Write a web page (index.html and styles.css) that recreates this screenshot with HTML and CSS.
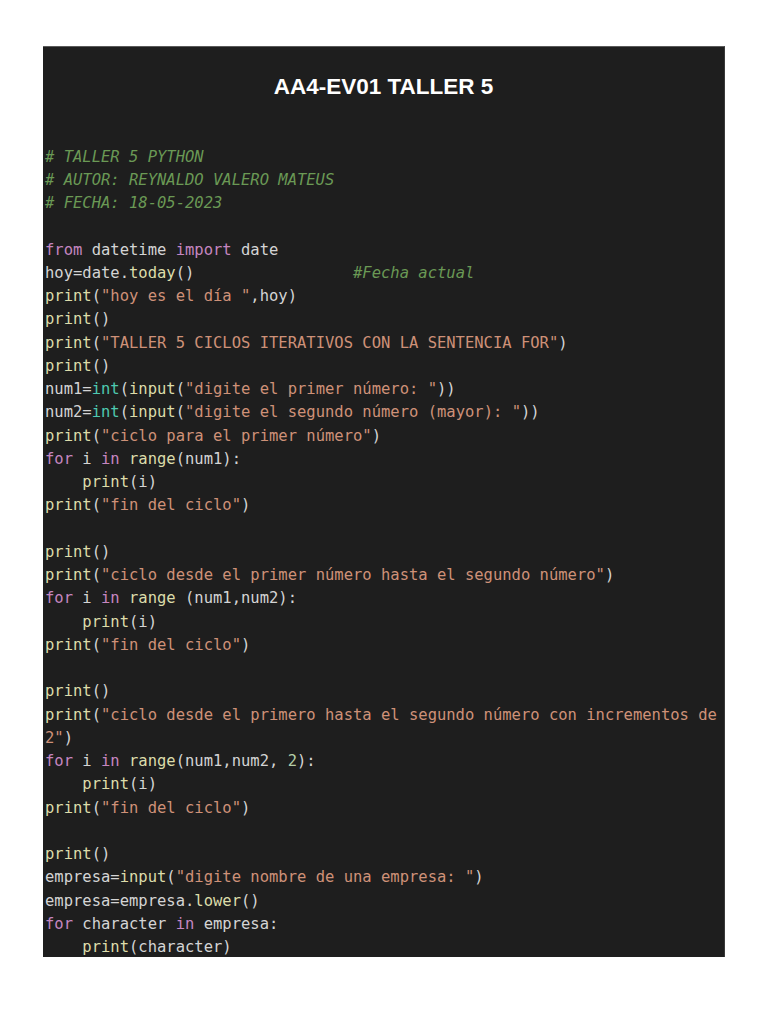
FILE: index.html
```html
<!DOCTYPE html>
<html lang="es">
<head>
<meta charset="utf-8">
<title>AA4-EV01 TALLER 5</title>
<link rel="stylesheet" href="styles.css">
</head>
<body>
<div class="sheet">
<h1 class="title">AA4-EV01 TALLER 5</h1>
<pre class="code"><span class="c"># TALLER 5 PYTHON</span>
<span class="c"># AUTOR: REYNALDO VALERO MATEUS</span>
<span class="c"># FECHA: 18-05-2023</span>

<span class="k">from</span> datetime <span class="k">import</span> date
hoy=date.<span class="f">today</span>()                 <span class="c">#Fecha actual</span>
<span class="f">print</span>(<span class="s">"hoy es el día "</span>,hoy)
<span class="f">print</span>()
<span class="f">print</span>(<span class="s">"TALLER 5 CICLOS ITERATIVOS CON LA SENTENCIA FOR"</span>)
<span class="f">print</span>()
num1=<span class="t">int</span>(<span class="f">input</span>(<span class="s">"digite el primer número: "</span>))
num2=<span class="t">int</span>(<span class="f">input</span>(<span class="s">"digite el segundo número (mayor): "</span>))
<span class="f">print</span>(<span class="s">"ciclo para el primer número"</span>)
<span class="k">for</span> i <span class="k">in</span> <span class="f">range</span>(num1):
    <span class="f">print</span>(i)
<span class="f">print</span>(<span class="s">"fin del ciclo"</span>)

<span class="f">print</span>()
<span class="f">print</span>(<span class="s">"ciclo desde el primer número hasta el segundo número"</span>)
<span class="k">for</span> i <span class="k">in</span> <span class="f">range</span> (num1,num2):
    <span class="f">print</span>(i)
<span class="f">print</span>(<span class="s">"fin del ciclo"</span>)

<span class="f">print</span>()
<span class="f">print</span>(<span class="s">"ciclo desde el primero hasta el segundo número con incrementos de 2"</span>)
<span class="k">for</span> i <span class="k">in</span> <span class="f">range</span>(num1,num2, <span class="n">2</span>):
    <span class="f">print</span>(i)
<span class="f">print</span>(<span class="s">"fin del ciclo"</span>)

<span class="f">print</span>()
empresa=<span class="f">input</span>(<span class="s">"digite nombre de una empresa: "</span>)
empresa=empresa.<span class="f">lower</span>()
<span class="k">for</span> character <span class="k">in</span> empresa:
    <span class="f">print</span>(character)</pre>
</div>
</body>
</html>
```

FILE: styles.css
```css
html, body {
  margin: 0;
  padding: 0;
  background: #ffffff;
}

.sheet {
  box-sizing: border-box;
  width: 682px;
  height: 911px;
  margin: 46px 0 0 43px;
  background: #1e1e1e;
  border-top: 1px solid #5a5a5a;
  border-right: 1px solid #3a3a3a;
  overflow: hidden;
}

.title {
  margin: 0;
  padding-top: 25px;
  font-family: "Liberation Sans", Arial, sans-serif;
  font-weight: bold;
  font-size: 22.5px;
  line-height: 30px;
  color: #ffffff;
  text-align: center;
}

.code {
  margin: 43.5px 0 0 0;
  padding: 0 0 0 2px;
  font-family: "DejaVu Sans Mono", monospace;
  font-size: 15.5px;
  line-height: 23.25px;
  color: #d4d4d4;
  white-space: pre-wrap;
}

.c { color: #6a9955; font-style: italic; }
.k { color: #c586c0; }
.f { color: #dcdcaa; }
.s { color: #ce9178; }
.t { color: #4ec9b0; }
.n { color: #b5cea8; }
```
